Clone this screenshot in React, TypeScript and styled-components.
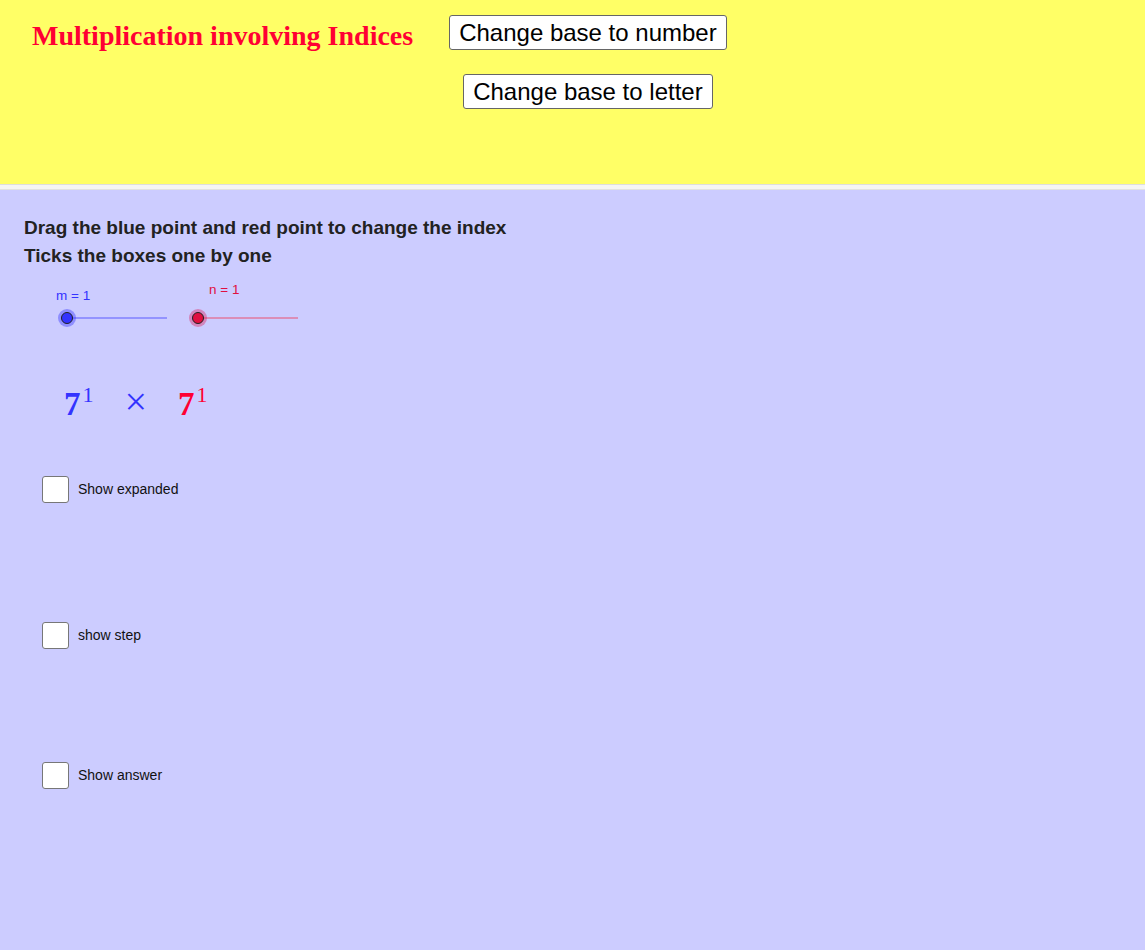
import React from 'react';
import styled, { createGlobalStyle } from 'styled-components';

const GlobalStyle = createGlobalStyle`
  html, body {
    margin: 0;
    padding: 0;
    background: #ffffff;
  }
  body {
    font-family: "Liberation Sans", Arial, sans-serif;
  }
`;

const BLUE = '#3333ff';
const RED = '#ff0033';

function Slider(props) {
  const { label, color, track, halo, labelOffset, labelGap } = props;
  return (
    <SliderBox>
      <SliderLabel $color={color} $offset={labelOffset} $gap={labelGap}>
        {label}
      </SliderLabel>
      <svg width="120" height="22" viewBox="0 0 120 22">
        <line x1="9" y1="11" x2="110" y2="11" stroke={track} strokeWidth="1.5" />
        <circle cx="10" cy="11" r="9" fill={halo} />
        <circle cx="10" cy="11" r="5.5" fill={color} stroke="#222" strokeWidth="1" />
      </svg>
    </SliderBox>
  );
}

function CheckOption(props) {
  return (
    <CheckRow $top={props.top}>
      <Box />
      <CheckLabel>{props.children}</CheckLabel>
    </CheckRow>
  );
}

export default function App() {
  return (
    <>
      <GlobalStyle />
      <Header>
        <Title>Multiplication involving Indices</Title>
        <ButtonStack>
          <BaseButton>Change base to number</BaseButton>
          <BaseButton>Change base to letter</BaseButton>
        </ButtonStack>
      </Header>
      <Divider />
      <Applet>
        <Instruction>Drag the blue point and red point to change the index</Instruction>
        <Instruction>Ticks the boxes one by one</Instruction>

        <SliderRow>
          <Slider
            label="m = 1"
            color={BLUE}
            track="#8080ff"
            halo="rgba(51, 51, 255, 0.4)"
            labelOffset={-1}
            labelGap={3}
          />
          <Slider
            label="n = 1"
            color="#e01040"
            track="#e07aa0"
            halo="rgba(220, 30, 90, 0.4)"
            labelOffset={21}
            labelGap={9}
          />
        </SliderRow>

        <MathRow>
          <Power $color={BLUE}>
            <Base>7</Base>
            <Exp>1</Exp>
          </Power>
          <Times>×</Times>
          <Power $color={RED}>
            <Base>7</Base>
            <Exp>1</Exp>
          </Power>
        </MathRow>

        <CheckOption top={51}>Show expanded</CheckOption>
        <CheckOption top={118}>show step</CheckOption>
        <CheckOption top={112}>Show answer</CheckOption>
      </Applet>
    </>
  );
}

const Header = styled.header`
  display: flex;
  align-items: flex-start;
  height: 184px;
  padding: 15px 0 0 32px;
  box-sizing: border-box;
  background: #ffff66;
`;

const Title = styled.h1`
  margin: 4px 0 0 0;
  font-family: "Liberation Serif", "Times New Roman", serif;
  font-weight: bold;
  font-size: 28px;
  line-height: 34px;
  color: ${RED};
`;

const ButtonStack = styled.div`
  display: flex;
  flex-direction: column;
  align-items: center;
  gap: 24px;
  margin-left: 36px;
`;

const BaseButton = styled.button`
  height: 35px;
  padding: 0 9px;
  background: #ffffff;
  border: 1px solid #666666;
  border-radius: 3px;
  font-family: "Liberation Sans", Arial, sans-serif;
  font-size: 24px;
  color: #000000;
  cursor: pointer;
`;

const Divider = styled.div`
  height: 4px;
  background: #f5f5f5;
  border-top: 1px solid #dedede;
  border-bottom: 1px solid #e2e2e2;
`;

const Applet = styled.main`
  height: 760px;
  padding: 24px 24px 0 24px;
  box-sizing: border-box;
  background: #ccccff;
  overflow: hidden;
`;

const Instruction = styled.div`
  font-size: 19px;
  font-weight: bold;
  line-height: 28px;
  color: #222222;
`;

const SliderRow = styled.div`
  display: flex;
  align-items: flex-end;
  gap: 11px;
  margin: 12px 0 0 33px;
`;

const SliderBox = styled.div`
  display: flex;
  flex-direction: column;
  svg {
    display: block;
  }
`;

const SliderLabel = styled.span`
  margin-left: ${(p) => p.$offset}px;
  margin-bottom: ${(p) => p.$gap}px;
  font-size: 13.5px;
  line-height: 16px;
  color: ${(p) => p.$color};
`;

const MathRow = styled.div`
  display: flex;
  align-items: baseline;
  gap: 31px;
  height: 44px;
  margin: 51px 0 0 40px;
  font-family: "Liberation Serif", "Times New Roman", serif;
`;

const Power = styled.span`
  color: ${(p) => p.$color};
  white-space: nowrap;
`;

const Base = styled.span`
  font-size: 33px;
  font-weight: bold;
  line-height: 44px;
`;

const Exp = styled.sup`
  margin-left: 2px;
  font-size: 22px;
  vertical-align: 13px;
  line-height: 0;
`;

const Times = styled.span`
  font-size: 40px;
  line-height: 44px;
  color: ${BLUE};
`;

const CheckRow = styled.label`
  display: flex;
  align-items: center;
  gap: 9px;
  height: 28px;
  margin: ${(p) => p.$top}px 0 0 18px;
`;

const Box = styled.span`
  width: 25px;
  height: 25px;
  background: #ffffff;
  border: 1.5px solid #777777;
  border-radius: 3px;
`;

const CheckLabel = styled.span`
  font-size: 14px;
  color: #111111;
`;
